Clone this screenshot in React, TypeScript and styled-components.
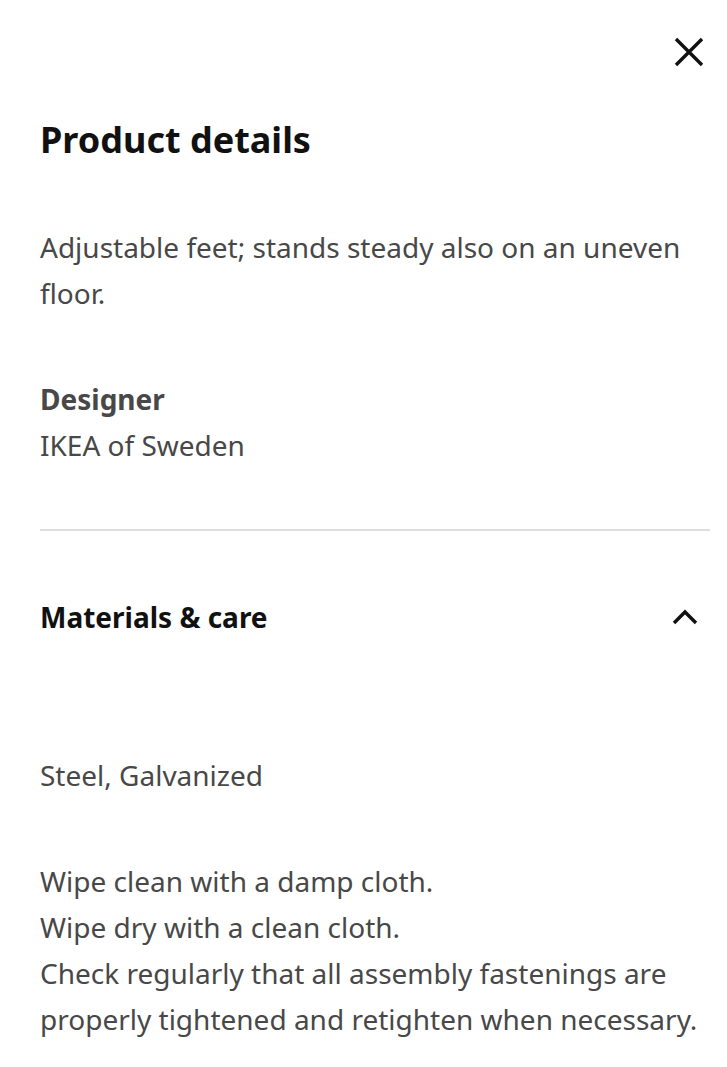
import React from "react";
import styled, { createGlobalStyle } from "styled-components";

const Global = createGlobalStyle`
  html, body { margin: 0; padding: 0; background: #fff; }
  body { font-family: "Noto Sans", "Open Sans", sans-serif; -webkit-font-smoothing: antialiased; }
`;

const Sheet = styled.div`
  width: 727px;
  min-height: 1067px;
  box-sizing: border-box;
  padding: 0 17px 0 40px;
  display: flex;
  flex-direction: column;
`;

const Header = styled.div`
  height: 104px;
  display: flex;
  align-items: center;
  justify-content: flex-end;
  margin-right: 3px;
`;

const IconButton = styled.button`
  width: 36px;
  height: 36px;
  padding: 0;
  border: none;
  background: transparent;
  display: flex;
  align-items: center;
  justify-content: center;
  cursor: pointer;
  color: #111;
`;

const Title = styled.h1`
  margin: 13px 0 0;
  font-size: 36px;
  line-height: 46px;
  font-weight: 700;
  color: #111;
`;

const Text = styled.p<{ $gap?: number }>`
  margin: ${(p) => p.$gap ?? 0}px 0 0;
  font-size: 28px;
  line-height: 46px;
  color: #484848;
`;

const Label = styled.div<{ $gap?: number }>`
  margin-top: ${(p) => p.$gap ?? 0}px;
  font-size: 28px;
  line-height: 46px;
  font-weight: 700;
  color: #484848;
`;

const Divider = styled.hr`
  margin: 61px 0 0;
  border: none;
  height: 2px;
  background: #dfdfdf;
`;

const AccordionHead = styled.div`
  margin-top: 63px;
  display: flex;
  align-items: center;
  justify-content: space-between;
`;

const AccordionTitle = styled.h2`
  margin: 0;
  font-size: 28px;
  line-height: 46px;
  font-weight: 700;
  color: #111;
`;

const Chevron = styled.span`
  display: flex;
  align-items: center;
  justify-content: center;
  width: 28px;
  height: 28px;
  margin-right: 11px;
  color: #111;
`;

export default function App() {
  return (
    <>
      <Global />
      <Sheet>
        <Header>
          <IconButton aria-label="Close">
            <svg width="30" height="30" viewBox="0 0 30 30" fill="none">
              <path d="M2 2 L28 28 M28 2 L2 28" stroke="currentColor" strokeWidth="3.4" />
            </svg>
          </IconButton>
        </Header>
        <Title>Product details</Title>
        <Text $gap={61}>Adjustable feet; stands steady also on an uneven floor.</Text>
        <Label $gap={60}>Designer</Label>
        <Text>IKEA of Sweden</Text>
        <Divider />
        <AccordionHead>
          <AccordionTitle>Materials &amp; care</AccordionTitle>
          <Chevron>
            <svg width="26" height="18" viewBox="0 0 26 18" fill="none">
              <path d="M2 15 L13 4 L24 15" stroke="currentColor" strokeWidth="3.4" />
            </svg>
          </Chevron>
        </AccordionHead>
        <Text $gap={112}>Steel, Galvanized</Text>
        <Text $gap={60}>
          Wipe clean with a damp cloth.
          <br />
          Wipe dry with a clean cloth.
          <br />
          Check regularly that all assembly fastenings are properly tightened and retighten when necessary.
        </Text>
      </Sheet>
    </>
  );
}
